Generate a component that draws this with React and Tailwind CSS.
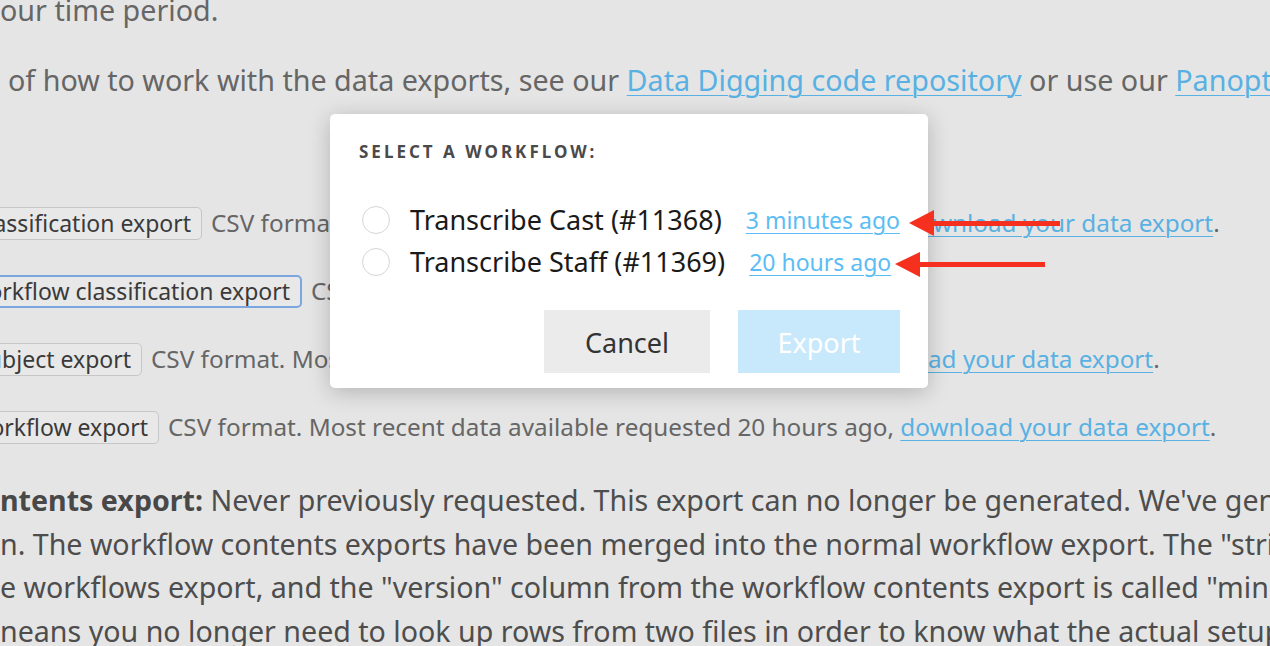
import React from "react";

const font = { fontFamily: '"Noto Sans", "Open Sans", sans-serif' };

function Row({ w, label, focused, children }) {
  return (
    <div className="flex items-center h-[34px] whitespace-nowrap">
      <div className="flex justify-end shrink-0" style={{ width: w }}>
        <button
          className={
            "shrink-0 whitespace-nowrap h-[33px] px-[10px] rounded-[5px] bg-[#e8e8e8] text-[#3a3a3a] text-[23px] leading-none " +
            (focused ? "border-2 border-[#7ba6df]" : "border border-[#c6c6c6]")
          }
        >
          {label}
        </button>
      </div>
      <span className="ml-[9px] text-[24.3px] text-[#666666]">{children}</span>
    </div>
  );
}

const Link = ({ children }) => (
  <a className="text-[#58b1e2] underline decoration-1 underline-offset-[4px]">{children}</a>
);

export default function App() {
  return (
    <div
      className="relative w-[1270px] h-[646px] overflow-hidden bg-[#e5e5e5]"
      style={font}
    >
      <div className="flex flex-col">
        <div className="h-[20px] leading-[20px] text-[28.7px] text-[#666666] whitespace-nowrap">
          our time period.
        </div>
        <div className="mt-[44px] h-[32px] leading-[32px] pl-[8px] text-[28.7px] text-[#666666] whitespace-nowrap">
          of how to work with the data exports, see our{" "}
          <Link>Data Digging code repository</Link> or use our{" "}
          <Link>Panoptes Aggregation code</Link>
        </div>

        <div className="mt-[110px] flex flex-col gap-[34px]">
          <Row w={202} label="Request new classification export">
            CSV format. Most recent data available requested a day ago,{" "}
            <Link>download your data export</Link>.
          </Row>
          <Row w={302} label="Request new workflow classification export" focused>
            CSV format. Never previously requested.
          </Row>
          <Row w={142} label="Request new subject export">
            CSV format. Most recent data available requested a day ago,{" "}
            <Link>download your data export</Link>.
          </Row>
          <Row w={159} label="Request new workflow export">
            CSV format. Most recent data available requested 20 hours ago,{" "}
            <Link>download your data export</Link>.
          </Row>
        </div>

        <div className="mt-[34px] text-[28.6px] leading-[43.5px] text-[#4d4d4d] whitespace-nowrap">
          <div>
            <b className="font-bold text-[#484848]">ntents export:</b> Never previously requested. This export can no longer be generated. We've generated
          </div>
          <div>n. The workflow contents exports have been merged into the normal workflow export. The "strings"</div>
          <div>e workflows export, and the "version" column from the workflow contents export is called "minor_version"</div>
          <div>neans you no longer need to look up rows from two files in order to know what the actual setup was</div>
        </div>
      </div>

      {/* Modal dialog */}
      <div className="absolute left-[330px] top-[114px] w-[598px] h-[274px] bg-white rounded-[5px] shadow-[0_4px_22px_rgba(0,0,0,0.22)] flex flex-col pl-[29px] pr-[28px] pt-[28px]">
        <div className="h-[20px] leading-[20px] text-[17px] font-bold tracking-[3px] text-[#4a4a4a] whitespace-nowrap">
          SELECT A WORKFLOW:
        </div>
        <div className="mt-[37px] flex flex-col">
          <label className="flex items-center h-[42px] whitespace-nowrap">
            <span className="ml-[3px] w-[28px] h-[28px] rounded-full border border-[#d6d6d6] bg-white shrink-0" />
            <span className="ml-[20px] text-[27px] text-[#1a1a1a]">Transcribe Cast (#11368)</span>
            <a className="ml-[24px] text-[23px] text-[#5bbdf3] underline decoration-1 underline-offset-[4px]">3 minutes ago</a>
          </label>
          <label className="flex items-center h-[42px] whitespace-nowrap">
            <span className="ml-[3px] w-[28px] h-[28px] rounded-full border border-[#d6d6d6] bg-white shrink-0" />
            <span className="ml-[20px] text-[27px] text-[#1a1a1a]">Transcribe Staff (#11369)</span>
            <a className="ml-[24px] text-[23px] text-[#5bbdf3] underline decoration-1 underline-offset-[4px]">20 hours ago</a>
          </label>
        </div>
        <div className="mt-[27px] flex justify-end gap-[28px]">
          <button className="w-[166px] h-[63px] pt-[3px] bg-[#ebebeb] text-[#333333] text-[27px]">Cancel</button>
          <button className="w-[162px] h-[63px] pt-[3px] bg-[#c8e9fb] text-white text-[27px]">Export</button>
        </div>
      </div>

      {/* Annotation arrows */}
      <svg
        className="absolute left-0 top-0 pointer-events-none"
        width="1270"
        height="646"
        viewBox="0 0 1270 646"
      >
        <rect x="928" y="221" width="132" height="5" fill="#f5301e" />
        <polygon points="909,223 934,210 934,236" fill="#f5301e" />
        <rect x="915" y="262" width="130" height="5" fill="#f5301e" />
        <polygon points="895,264 920,252 920,277" fill="#f5301e" />
      </svg>
    </div>
  );
}
